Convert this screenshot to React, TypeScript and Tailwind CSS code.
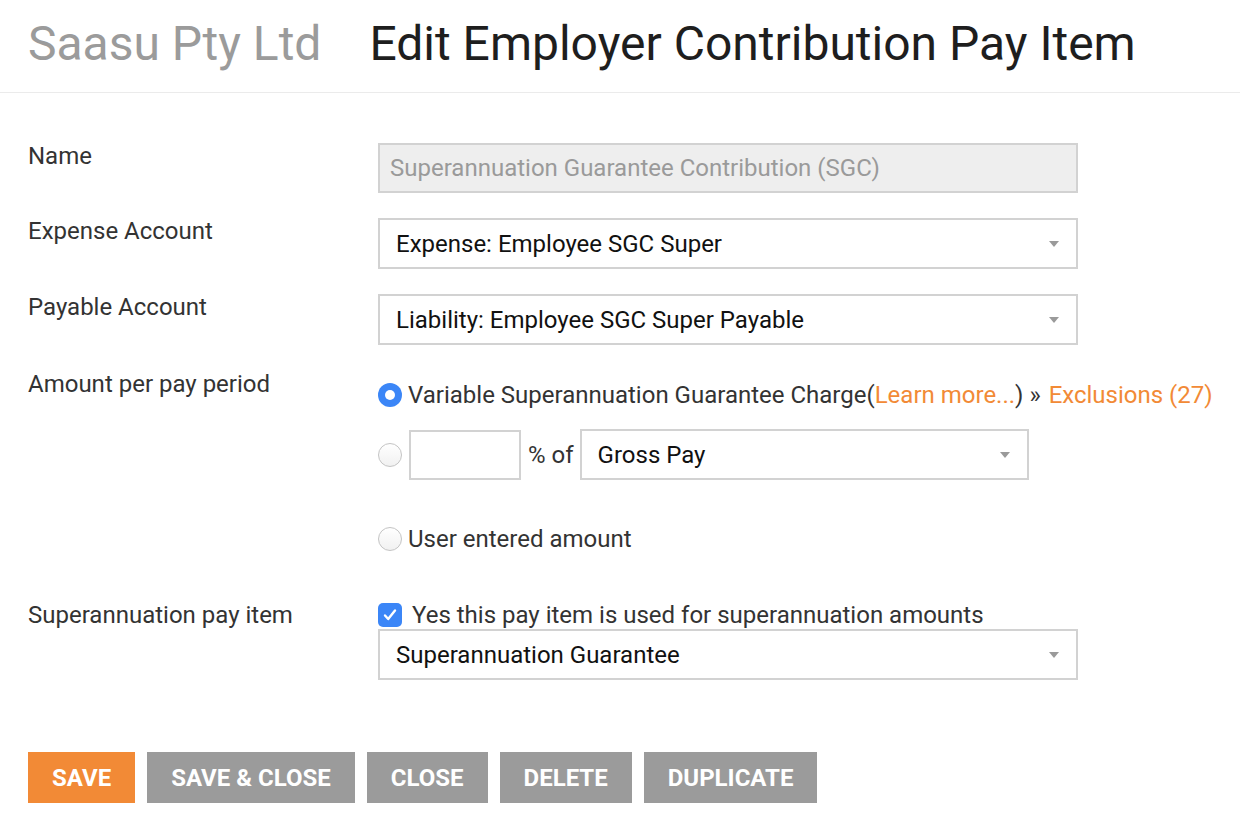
import React from 'react'

const font = { fontFamily: 'Roboto, "Liberation Sans", sans-serif' }

function Caret() {
  return (
    <svg width="12" height="8" viewBox="0 0 12 8" className="shrink-0">
      <path d="M1 1h10L6 7z" fill="#9a9a9a" />
    </svg>
  )
}

function SelectBox({ value, className = '' }: { value: string; className?: string }) {
  return (
    <div
      className={`h-[51px] border-2 border-[#d2d2d2] bg-white flex items-center justify-between pl-[16px] pr-[16px] text-[24px] text-[#111] ${className}`}
    >
      <span>{value}</span>
      <Caret />
    </div>
  )
}

function Radio({ checked }: { checked?: boolean }) {
  if (checked) {
    return (
      <span className="w-[24px] h-[24px] rounded-full bg-[#3b86f7] flex items-center justify-center shrink-0">
        <span className="w-[10px] h-[10px] rounded-full bg-white" />
      </span>
    )
  }
  return (
    <span className="w-[24px] h-[24px] rounded-full border border-[#c4c4c4] bg-gradient-to-b from-white to-[#f1f1f1] shrink-0" />
  )
}

function Checkbox() {
  return (
    <span className="w-[24px] h-[24px] rounded-[5px] bg-[#3b86f7] flex items-center justify-center shrink-0">
      <svg width="16" height="16" viewBox="0 0 16 16">
        <path d="M3 8.5l3.2 3.5L13 3.5" stroke="white" strokeWidth="2.4" fill="none" strokeLinecap="round" strokeLinejoin="round" />
      </svg>
    </span>
  )
}

function Row({ label, children, className = '' }: { label: string; children: React.ReactNode; className?: string }) {
  return (
    <div className={`flex ${className}`}>
      <div className="w-[350px] shrink-0 text-[24px] leading-[26px] text-[#333]">{label}</div>
      <div className="flex-1">{children}</div>
    </div>
  )
}

function Button({ label, primary }: { label: string; primary?: boolean }) {
  return (
    <button
      className={`h-[51px] px-[24px] text-white font-bold text-[24px] ${primary ? 'bg-[#f28a36]' : 'bg-[#9b9b9b]'}`}
    >
      {label}
    </button>
  )
}

export default function App() {
  return (
    <div className="w-[1240px] h-[840px] bg-white overflow-hidden" style={font}>
      <div className="h-[93px] border-b border-[#ebebeb] flex items-center px-[28px] pb-[4px]">
        <span className="text-[48px] text-[#9b9b9b]">Saasu Pty Ltd</span>
        <span className="text-[48px] text-[#1e1e1e] ml-[48px]">Edit Employer Contribution Pay Item</span>
      </div>

      <div className="px-[28px] pt-[50px]">
        <Row label="Name">
          <div className="w-[700px] h-[50px] border-2 border-[#d2d2d2] bg-[#eeeeee] flex items-center pl-[10px] text-[24px] text-[#9a9a9a]">
            Superannuation Guarantee Contribution (SGC)
          </div>
        </Row>

        <Row label="Expense Account" className="mt-[25px]">
          <SelectBox value="Expense: Employee SGC Super" className="w-[700px]" />
        </Row>

        <Row label="Payable Account" className="mt-[25px]">
          <SelectBox value="Liability: Employee SGC Super Payable" className="w-[700px]" />
        </Row>

        <Row label="Amount per pay period" className="mt-[26px]">
          <div className="flex items-center h-[48px] text-[24px] text-[#333] whitespace-nowrap">
            <Radio checked />
            <span className="ml-[6px]">Variable Superannuation Guarantee Charge</span>
            <span>(</span>
            <span className="text-[#f28a36]">Learn more...</span>
            <span>) » </span>
            <span className="text-[#f28a36] ml-[8px]">Exclusions (27)</span>
          </div>
          <div className="flex items-center mt-[10px] text-[24px] text-[#333]">
            <Radio />
            <div className="ml-[7px] w-[112px] h-[50px] border-2 border-[#d2d2d2] bg-white" />
            <span className="ml-[7px]">% of</span>
            <SelectBox value="Gross Pay" className="ml-[6px] w-[449px]" />
          </div>
          <div className="flex items-center mt-[34px] h-[50px] text-[24px] text-[#333]">
            <Radio />
            <span className="ml-[6px]">User entered amount</span>
          </div>
        </Row>

        <Row label="Superannuation pay item" className="mt-[38px]">
          <div className="flex items-center h-[26px] text-[24px] text-[#333]">
            <Checkbox />
            <span className="ml-[10px]">Yes this pay item is used for superannuation amounts</span>
          </div>
          <SelectBox value="Superannuation Guarantee" className="w-[700px] mt-[1px]" />
        </Row>

        <div className="flex gap-[12px] mt-[72px]">
          <Button label="SAVE" primary />
          <Button label="SAVE & CLOSE" />
          <Button label="CLOSE" />
          <Button label="DELETE" />
          <Button label="DUPLICATE" />
        </div>
      </div>
    </div>
  )
}
